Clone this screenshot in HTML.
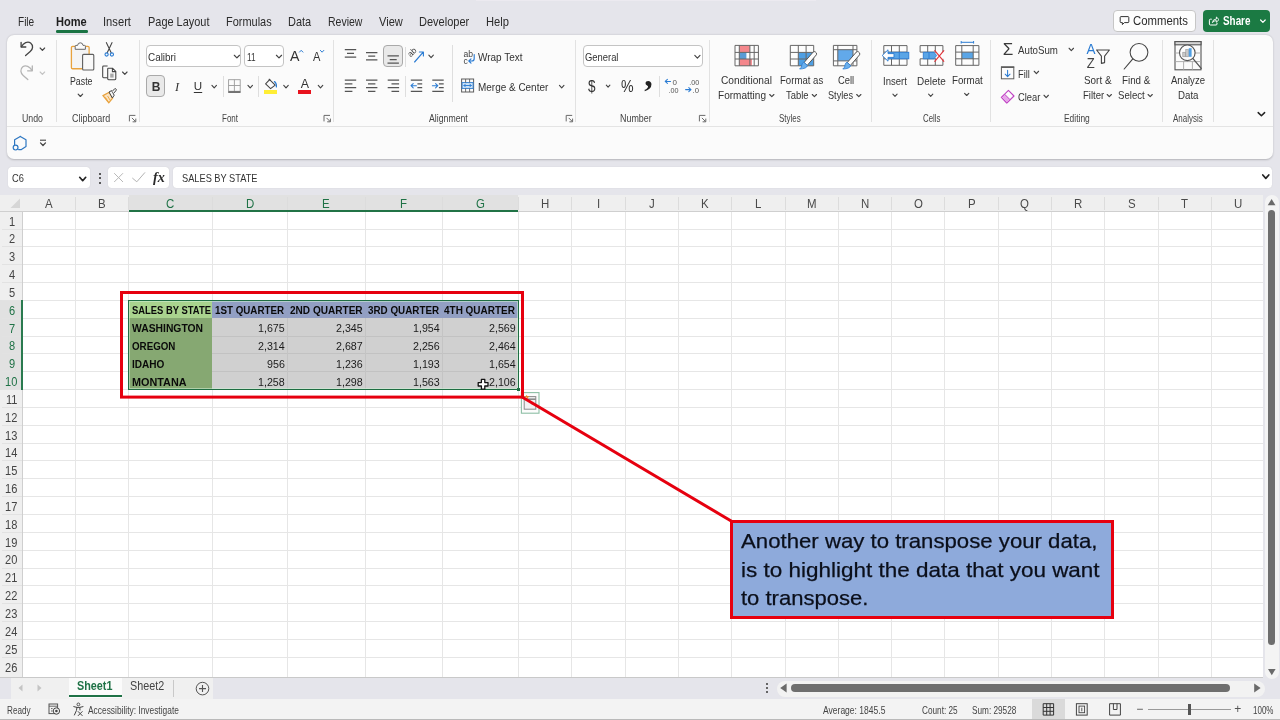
<!DOCTYPE html>
<html><head><meta charset="utf-8"><title>Excel</title>
<style>
html,body{margin:0;padding:0;}
body{width:1280px;height:720px;overflow:hidden;background:#e5e5eb;position:relative;font-family:"Liberation Sans",sans-serif;}
body>div{position:absolute;}
.t{position:absolute;white-space:nowrap;transform-origin:0 50%;}
#pg{position:absolute;left:0;top:0;width:1280px;height:720px;will-change:transform;}
#pg>div{position:absolute;}
svg.ov{position:absolute;left:0;top:0;width:1280px;height:720px;pointer-events:none;}
</style></head><body><div id="pg">
<div style="left:7px;top:35px;width:1266px;height:123.5px;background:#fbfbfb;border-radius:7px;box-shadow:0 0.5px 2px rgba(0,0,0,.22);"></div>
<div style="left:7px;top:126px;width:1266px;height:1px;background:#e4e4e4;"></div>
<div style="left:476px;top:0px;width:340px;height:1px;background:#eceaf0;"></div>
<span class="t" style="left:18.00px;top:16.41px;font-size:12.2px;line-height:12.2px;color:#2b2b2b;transform:scaleX(0.8248);">File</span>
<span class="t" style="left:56.20px;top:16.41px;font-size:12.2px;line-height:12.2px;color:#1f1f1f;font-weight:700;transform:scaleX(0.9081);">Home</span>
<span class="t" style="left:102.70px;top:16.41px;font-size:12.2px;line-height:12.2px;color:#2b2b2b;transform:scaleX(0.9180);">Insert</span>
<span class="t" style="left:147.50px;top:16.41px;font-size:12.2px;line-height:12.2px;color:#2b2b2b;transform:scaleX(0.8978);">Page Layout</span>
<span class="t" style="left:225.50px;top:16.41px;font-size:12.2px;line-height:12.2px;color:#2b2b2b;transform:scaleX(0.8983);">Formulas</span>
<span class="t" style="left:287.50px;top:16.41px;font-size:12.2px;line-height:12.2px;color:#2b2b2b;transform:scaleX(0.8991);">Data</span>
<span class="t" style="left:327.50px;top:16.41px;font-size:12.2px;line-height:12.2px;color:#2b2b2b;transform:scaleX(0.8622);">Review</span>
<span class="t" style="left:378.70px;top:16.41px;font-size:12.2px;line-height:12.2px;color:#2b2b2b;transform:scaleX(0.9074);">View</span>
<span class="t" style="left:419.20px;top:16.41px;font-size:12.2px;line-height:12.2px;color:#2b2b2b;transform:scaleX(0.9042);">Developer</span>
<span class="t" style="left:486.20px;top:16.41px;font-size:12.2px;line-height:12.2px;color:#2b2b2b;transform:scaleX(0.9174);">Help</span>
<div style="left:56px;top:30px;width:31.8px;height:2.5px;background:#1a7343;border-radius:1.2px;"></div>
<div style="left:1112.5px;top:9.5px;width:83px;height:22px;background:#fdfdfd;border-radius:4px;border:1px solid #c6c6c6;box-sizing:border-box;"></div>
<span class="t" style="left:1133.00px;top:15.21px;font-size:12.2px;line-height:12.2px;color:#2b2b2b;transform:scaleX(0.9324);">Comments</span>
<div style="left:1203px;top:9.5px;width:67px;height:22px;background:#1b7a43;border-radius:4px;"></div>
<span class="t" style="left:1223.10px;top:15.02px;font-size:12.2px;line-height:12.2px;color:#fff;font-weight:700;transform:scaleX(0.8108);">Share</span>
<span class="t" style="left:22.00px;top:113.90px;font-size:10.4px;line-height:10.4px;color:#444;transform:scaleX(0.8449);">Undo</span>
<span class="t" style="left:71.70px;top:113.90px;font-size:10.4px;line-height:10.4px;color:#444;transform:scaleX(0.8604);">Clipboard</span>
<span class="t" style="left:221.50px;top:113.90px;font-size:10.4px;line-height:10.4px;color:#444;transform:scaleX(0.7692);">Font</span>
<span class="t" style="left:428.70px;top:113.90px;font-size:10.4px;line-height:10.4px;color:#444;transform:scaleX(0.8393);">Alignment</span>
<span class="t" style="left:619.50px;top:113.90px;font-size:10.4px;line-height:10.4px;color:#444;transform:scaleX(0.8574);">Number</span>
<span class="t" style="left:778.70px;top:113.90px;font-size:10.4px;line-height:10.4px;color:#444;transform:scaleX(0.7692);">Styles</span>
<span class="t" style="left:922.50px;top:113.90px;font-size:10.4px;line-height:10.4px;color:#444;transform:scaleX(0.7563);">Cells</span>
<span class="t" style="left:1063.70px;top:113.90px;font-size:10.4px;line-height:10.4px;color:#444;transform:scaleX(0.8107);">Editing</span>
<span class="t" style="left:1173.00px;top:113.90px;font-size:10.4px;line-height:10.4px;color:#444;transform:scaleX(0.7666);">Analysis</span>
<div style="left:56.2px;top:40px;width:1px;height:82px;background:#e2e2e2;"></div>
<div style="left:138.7px;top:40px;width:1px;height:82px;background:#e2e2e2;"></div>
<div style="left:333.2px;top:40px;width:1px;height:82px;background:#e2e2e2;"></div>
<div style="left:575.0px;top:40px;width:1px;height:82px;background:#e2e2e2;"></div>
<div style="left:708.7px;top:40px;width:1px;height:82px;background:#e2e2e2;"></div>
<div style="left:870.7px;top:40px;width:1px;height:82px;background:#e2e2e2;"></div>
<div style="left:990.2px;top:40px;width:1px;height:82px;background:#e2e2e2;"></div>
<div style="left:1162.2px;top:40px;width:1px;height:82px;background:#e2e2e2;"></div>
<div style="left:1213.1px;top:40px;width:1px;height:82px;background:#e2e2e2;"></div>
<div style="left:222.5px;top:76px;width:1px;height:21px;background:#dedede;"></div>
<div style="left:258.2px;top:76px;width:1px;height:21px;background:#dedede;"></div>
<div style="left:404.5px;top:47px;width:1px;height:20px;background:#dedede;"></div>
<div style="left:404.5px;top:76px;width:1px;height:21px;background:#dedede;"></div>
<div style="left:452.0px;top:45px;width:1px;height:57px;background:#dedede;"></div>
<div style="left:659.0px;top:76px;width:1px;height:21px;background:#dedede;"></div>
<span class="t" style="left:69.50px;top:75.40px;font-size:11.6px;line-height:11.6px;color:#333;transform:scaleX(0.7592);">Paste</span>
<div style="left:146.1px;top:45.1px;width:95.4px;height:22.3px;background:#fff;border-radius:4px;border:1px solid #c4c4c4;box-sizing:border-box;"></div>
<span class="t" style="left:148.40px;top:51.21px;font-size:11.6px;line-height:11.6px;color:#333;transform:scaleX(0.8545);">Calibri</span>
<div style="left:243.7px;top:45.1px;width:40.5px;height:22.3px;background:#fff;border-radius:4px;border:1px solid #c4c4c4;box-sizing:border-box;"></div>
<span class="t" style="left:246.60px;top:51.21px;font-size:11.6px;line-height:11.6px;color:#333;transform:scaleX(0.7129);">11</span>
<div style="left:146.2px;top:75px;width:19.3px;height:22px;background:#e9e9e9;border-radius:4px;border:1px solid #a9a9a9;box-sizing:border-box;"></div>
<span class="t" style="left:151.68px;top:80.60px;font-size:12px;line-height:12px;color:#333;font-weight:700;">B</span>
<span class="t" style="left:174.99px;top:80.60px;font-size:12.5px;line-height:12.5px;color:#333;font-family:'Liberation Serif',serif;font-style:italic;">I</span>
<span class="t" style="left:193.82px;top:80.21px;font-size:11.6px;line-height:11.6px;color:#333;text-decoration:underline;text-underline-offset:1.5px;">U</span>
<span class="t" style="left:289.95px;top:47.81px;font-size:15.4px;line-height:15.4px;color:#333;transform:scaleX(0.9200);">A</span>
<span class="t" style="left:312.89px;top:50.81px;font-size:12.6px;line-height:12.6px;color:#333;transform:scaleX(0.8800);">A</span>
<span class="t" style="left:300.85px;top:78.41px;font-size:12.4px;line-height:12.4px;color:#333;">A</span>
<div style="left:298.1px;top:90px;width:13px;height:3.5px;background:#e8121d;"></div>
<div style="left:263.9px;top:90px;width:13.6px;height:3.5px;background:#ffee35;"></div>
<div style="left:383.2px;top:45.2px;width:20px;height:22px;background:#e9e9e9;border-radius:4px;border:1px solid #a9a9a9;box-sizing:border-box;"></div>
<span class="t" style="left:478.00px;top:51.21px;font-size:11.6px;line-height:11.6px;color:#333;transform:scaleX(0.8592);">Wrap Text</span>
<span class="t" style="left:478.20px;top:80.71px;font-size:11.6px;line-height:11.6px;color:#333;transform:scaleX(0.8584);">Merge &amp; Center</span>
<div style="left:582.6px;top:45.1px;width:120px;height:22.4px;background:#fff;border-radius:4px;border:1px solid #c4c4c4;box-sizing:border-box;"></div>
<span class="t" style="left:584.70px;top:51.21px;font-size:11.6px;line-height:11.6px;color:#333;transform:scaleX(0.8112);">General</span>
<span class="t" style="left:588.25px;top:77.80px;font-size:16.5px;line-height:16.5px;color:#333;transform:scaleX(0.8200);">$</span>
<span class="t" style="left:620.69px;top:78.21px;font-size:16.5px;line-height:16.5px;color:#333;transform:scaleX(0.8600);">%</span>
<span class="t" style="left:644.35px;top:58.30px;font-size:34px;line-height:34px;color:#222;font-family:'Liberation Serif',serif;font-weight:700;">,</span>
<span class="t" style="left:720.70px;top:73.61px;font-size:11.6px;line-height:11.6px;color:#333;transform:scaleX(0.8784);">Conditional</span>
<span class="t" style="left:717.50px;top:89.21px;font-size:11.6px;line-height:11.6px;color:#333;transform:scaleX(0.8657);">Formatting</span>
<span class="t" style="left:780.00px;top:73.61px;font-size:11.6px;line-height:11.6px;color:#333;transform:scaleX(0.8276);">Format as</span>
<span class="t" style="left:785.70px;top:89.21px;font-size:11.6px;line-height:11.6px;color:#333;transform:scaleX(0.8116);">Table</span>
<span class="t" style="left:837.50px;top:73.61px;font-size:11.6px;line-height:11.6px;color:#333;transform:scaleX(0.8096);">Cell</span>
<span class="t" style="left:828.00px;top:89.21px;font-size:11.6px;line-height:11.6px;color:#333;transform:scaleX(0.7909);">Styles</span>
<span class="t" style="left:883.20px;top:74.81px;font-size:11.6px;line-height:11.6px;color:#333;transform:scaleX(0.8207);">Insert</span>
<span class="t" style="left:917.00px;top:74.81px;font-size:11.6px;line-height:11.6px;color:#333;transform:scaleX(0.8561);">Delete</span>
<span class="t" style="left:951.70px;top:73.90px;font-size:11.6px;line-height:11.6px;color:#333;transform:scaleX(0.8389);">Format</span>
<span class="t" style="left:1018.20px;top:43.71px;font-size:11.6px;line-height:11.6px;color:#333;transform:scaleX(0.8380);">AutoSum</span>
<span class="t" style="left:1018.20px;top:67.51px;font-size:11.6px;line-height:11.6px;color:#333;transform:scaleX(0.7978);">Fill</span>
<span class="t" style="left:1018.20px;top:91.21px;font-size:11.6px;line-height:11.6px;color:#333;transform:scaleX(0.8044);">Clear</span>
<span class="t" style="left:1083.70px;top:73.61px;font-size:11.6px;line-height:11.6px;color:#333;transform:scaleX(0.8528);">Sort &amp;</span>
<span class="t" style="left:1082.50px;top:89.21px;font-size:11.6px;line-height:11.6px;color:#333;transform:scaleX(0.8232);">Filter</span>
<span class="t" style="left:1121.70px;top:73.61px;font-size:11.6px;line-height:11.6px;color:#333;transform:scaleX(0.8442);">Find &amp;</span>
<span class="t" style="left:1118.20px;top:89.21px;font-size:11.6px;line-height:11.6px;color:#333;transform:scaleX(0.8311);">Select</span>
<span class="t" style="left:1171.00px;top:73.61px;font-size:11.6px;line-height:11.6px;color:#333;transform:scaleX(0.8233);">Analyze</span>
<span class="t" style="left:1177.50px;top:88.61px;font-size:11.6px;line-height:11.6px;color:#333;transform:scaleX(0.8356);">Data</span>
<span class="t" style="left:1002.73px;top:41.21px;font-size:17px;line-height:17px;color:#3a3a3a;">Σ</span>
<div style="left:7.7px;top:167px;width:82.6px;height:21px;background:#fff;border-radius:3.5px;box-shadow:0 0 1px rgba(0,0,0,.18);"></div>
<span class="t" style="left:11.80px;top:173.01px;font-size:11.8px;line-height:11.8px;color:#333;transform:scaleX(0.7879);">C6</span>
<div style="left:98.5px;top:173.0px;width:2.2px;height:2.2px;background:#2b2b2b;border-radius:1px;"></div>
<div style="left:98.5px;top:177.3px;width:2.2px;height:2.2px;background:#2b2b2b;border-radius:1px;"></div>
<div style="left:98.5px;top:181.6px;width:2.2px;height:2.2px;background:#2b2b2b;border-radius:1px;"></div>
<div style="left:108.4px;top:167px;width:60.8px;height:21px;background:#fff;border-radius:3.5px;box-shadow:0 0 1px rgba(0,0,0,.18);"></div>
<span class="t" style="left:153.20px;top:169.92px;font-size:15px;line-height:15px;color:#2b2b2b;font-family:'Liberation Serif',serif;font-weight:700;font-style:italic;transform:scaleX(0.9421);">fx</span>
<div style="left:173.2px;top:167px;width:1099px;height:21px;background:#fff;border-radius:3.5px;box-shadow:0 0 1px rgba(0,0,0,.18);"></div>
<span class="t" style="left:182.00px;top:173.00px;font-size:11px;line-height:11px;color:#333;transform:scaleX(0.8401);">SALES BY STATE</span>
<div style="left:0px;top:195px;width:1263.3px;height:482.0px;background:#fff;"></div>
<div style="left:0px;top:195px;width:1263.3px;height:16.4px;background:#efefef;"></div>
<div style="left:0px;top:211.2px;width:22.5px;height:465.8px;background:#efefef;"></div>
<div style="left:128.8px;top:195px;width:389.7px;height:16.4px;background:#e1e1e1;"></div>
<div style="left:0px;top:300.4px;width:22.5px;height:89.2px;background:#e1e1e1;"></div>
<div style="left:0px;top:210.8px;width:1263.3px;height:1px;background:#cfcfcf;"></div>
<div style="left:22px;top:211px;width:1px;height:466.0px;background:#cfcfcf;"></div>
<div style="left:22.5px;top:228.54px;width:1240.8px;height:1px;background:#e6e6e6;"></div>
<div style="left:22.5px;top:246.38px;width:1240.8px;height:1px;background:#e6e6e6;"></div>
<div style="left:22.5px;top:264.21999999999997px;width:1240.8px;height:1px;background:#e6e6e6;"></div>
<div style="left:22.5px;top:282.06px;width:1240.8px;height:1px;background:#e6e6e6;"></div>
<div style="left:22.5px;top:299.9px;width:1240.8px;height:1px;background:#e6e6e6;"></div>
<div style="left:22.5px;top:317.74px;width:1240.8px;height:1px;background:#e6e6e6;"></div>
<div style="left:22.5px;top:335.58px;width:1240.8px;height:1px;background:#e6e6e6;"></div>
<div style="left:22.5px;top:353.41999999999996px;width:1240.8px;height:1px;background:#e6e6e6;"></div>
<div style="left:22.5px;top:371.26px;width:1240.8px;height:1px;background:#e6e6e6;"></div>
<div style="left:22.5px;top:389.1px;width:1240.8px;height:1px;background:#e6e6e6;"></div>
<div style="left:22.5px;top:406.94px;width:1240.8px;height:1px;background:#e6e6e6;"></div>
<div style="left:22.5px;top:424.78px;width:1240.8px;height:1px;background:#e6e6e6;"></div>
<div style="left:22.5px;top:442.62px;width:1240.8px;height:1px;background:#e6e6e6;"></div>
<div style="left:22.5px;top:460.46px;width:1240.8px;height:1px;background:#e6e6e6;"></div>
<div style="left:22.5px;top:478.3px;width:1240.8px;height:1px;background:#e6e6e6;"></div>
<div style="left:22.5px;top:496.14px;width:1240.8px;height:1px;background:#e6e6e6;"></div>
<div style="left:22.5px;top:513.98px;width:1240.8px;height:1px;background:#e6e6e6;"></div>
<div style="left:22.5px;top:531.8199999999999px;width:1240.8px;height:1px;background:#e6e6e6;"></div>
<div style="left:22.5px;top:549.66px;width:1240.8px;height:1px;background:#e6e6e6;"></div>
<div style="left:22.5px;top:567.5px;width:1240.8px;height:1px;background:#e6e6e6;"></div>
<div style="left:22.5px;top:585.3399999999999px;width:1240.8px;height:1px;background:#e6e6e6;"></div>
<div style="left:22.5px;top:603.1800000000001px;width:1240.8px;height:1px;background:#e6e6e6;"></div>
<div style="left:22.5px;top:621.02px;width:1240.8px;height:1px;background:#e6e6e6;"></div>
<div style="left:22.5px;top:638.8599999999999px;width:1240.8px;height:1px;background:#e6e6e6;"></div>
<div style="left:22.5px;top:656.7px;width:1240.8px;height:1px;background:#e6e6e6;"></div>
<div style="left:75.0px;top:211.5px;width:1px;height:465.5px;background:#e6e6e6;"></div>
<div style="left:128.3px;top:211.5px;width:1px;height:465.5px;background:#e6e6e6;"></div>
<div style="left:211.8px;top:211.5px;width:1px;height:465.5px;background:#e6e6e6;"></div>
<div style="left:286.5px;top:211.5px;width:1px;height:465.5px;background:#e6e6e6;"></div>
<div style="left:364.7px;top:211.5px;width:1px;height:465.5px;background:#e6e6e6;"></div>
<div style="left:441.7px;top:211.5px;width:1px;height:465.5px;background:#e6e6e6;"></div>
<div style="left:518.0px;top:211.5px;width:1px;height:465.5px;background:#e6e6e6;"></div>
<div style="left:571.3px;top:211.5px;width:1px;height:465.5px;background:#e6e6e6;"></div>
<div style="left:624.6px;top:211.5px;width:1px;height:465.5px;background:#e6e6e6;"></div>
<div style="left:677.9px;top:211.5px;width:1px;height:465.5px;background:#e6e6e6;"></div>
<div style="left:731.2px;top:211.5px;width:1px;height:465.5px;background:#e6e6e6;"></div>
<div style="left:784.5px;top:211.5px;width:1px;height:465.5px;background:#e6e6e6;"></div>
<div style="left:837.8px;top:211.5px;width:1px;height:465.5px;background:#e6e6e6;"></div>
<div style="left:891.0999999999999px;top:211.5px;width:1px;height:465.5px;background:#e6e6e6;"></div>
<div style="left:944.4px;top:211.5px;width:1px;height:465.5px;background:#e6e6e6;"></div>
<div style="left:997.7px;top:211.5px;width:1px;height:465.5px;background:#e6e6e6;"></div>
<div style="left:1051.0px;top:211.5px;width:1px;height:465.5px;background:#e6e6e6;"></div>
<div style="left:1104.3px;top:211.5px;width:1px;height:465.5px;background:#e6e6e6;"></div>
<div style="left:1157.6px;top:211.5px;width:1px;height:465.5px;background:#e6e6e6;"></div>
<div style="left:1210.9px;top:211.5px;width:1px;height:465.5px;background:#e6e6e6;"></div>
<div style="left:1264.1999999999998px;top:211.5px;width:1px;height:465.5px;background:#e6e6e6;"></div>
<div style="left:75.0px;top:197px;width:1px;height:13px;background:#dcdcdc;"></div>
<div style="left:128.3px;top:197px;width:1px;height:13px;background:#dcdcdc;"></div>
<div style="left:211.8px;top:197px;width:1px;height:13px;background:#dcdcdc;"></div>
<div style="left:286.5px;top:197px;width:1px;height:13px;background:#dcdcdc;"></div>
<div style="left:364.7px;top:197px;width:1px;height:13px;background:#dcdcdc;"></div>
<div style="left:441.7px;top:197px;width:1px;height:13px;background:#dcdcdc;"></div>
<div style="left:518.0px;top:197px;width:1px;height:13px;background:#dcdcdc;"></div>
<div style="left:571.3px;top:197px;width:1px;height:13px;background:#dcdcdc;"></div>
<div style="left:624.6px;top:197px;width:1px;height:13px;background:#dcdcdc;"></div>
<div style="left:677.9px;top:197px;width:1px;height:13px;background:#dcdcdc;"></div>
<div style="left:731.2px;top:197px;width:1px;height:13px;background:#dcdcdc;"></div>
<div style="left:784.5px;top:197px;width:1px;height:13px;background:#dcdcdc;"></div>
<div style="left:837.8px;top:197px;width:1px;height:13px;background:#dcdcdc;"></div>
<div style="left:891.0999999999999px;top:197px;width:1px;height:13px;background:#dcdcdc;"></div>
<div style="left:944.4px;top:197px;width:1px;height:13px;background:#dcdcdc;"></div>
<div style="left:997.7px;top:197px;width:1px;height:13px;background:#dcdcdc;"></div>
<div style="left:1051.0px;top:197px;width:1px;height:13px;background:#dcdcdc;"></div>
<div style="left:1104.3px;top:197px;width:1px;height:13px;background:#dcdcdc;"></div>
<div style="left:1157.6px;top:197px;width:1px;height:13px;background:#dcdcdc;"></div>
<div style="left:1210.9px;top:197px;width:1px;height:13px;background:#dcdcdc;"></div>
<div style="left:1264.1999999999998px;top:197px;width:1px;height:13px;background:#dcdcdc;"></div>
<div style="left:2px;top:228.54px;width:20px;height:1px;background:#e2e2e2;"></div>
<div style="left:2px;top:246.38px;width:20px;height:1px;background:#e2e2e2;"></div>
<div style="left:2px;top:264.21999999999997px;width:20px;height:1px;background:#e2e2e2;"></div>
<div style="left:2px;top:282.06px;width:20px;height:1px;background:#e2e2e2;"></div>
<div style="left:2px;top:299.9px;width:20px;height:1px;background:#e2e2e2;"></div>
<div style="left:2px;top:317.74px;width:20px;height:1px;background:#e2e2e2;"></div>
<div style="left:2px;top:335.58px;width:20px;height:1px;background:#e2e2e2;"></div>
<div style="left:2px;top:353.41999999999996px;width:20px;height:1px;background:#e2e2e2;"></div>
<div style="left:2px;top:371.26px;width:20px;height:1px;background:#e2e2e2;"></div>
<div style="left:2px;top:389.1px;width:20px;height:1px;background:#e2e2e2;"></div>
<div style="left:2px;top:406.94px;width:20px;height:1px;background:#e2e2e2;"></div>
<div style="left:2px;top:424.78px;width:20px;height:1px;background:#e2e2e2;"></div>
<div style="left:2px;top:442.62px;width:20px;height:1px;background:#e2e2e2;"></div>
<div style="left:2px;top:460.46px;width:20px;height:1px;background:#e2e2e2;"></div>
<div style="left:2px;top:478.3px;width:20px;height:1px;background:#e2e2e2;"></div>
<div style="left:2px;top:496.14px;width:20px;height:1px;background:#e2e2e2;"></div>
<div style="left:2px;top:513.98px;width:20px;height:1px;background:#e2e2e2;"></div>
<div style="left:2px;top:531.8199999999999px;width:20px;height:1px;background:#e2e2e2;"></div>
<div style="left:2px;top:549.66px;width:20px;height:1px;background:#e2e2e2;"></div>
<div style="left:2px;top:567.5px;width:20px;height:1px;background:#e2e2e2;"></div>
<div style="left:2px;top:585.3399999999999px;width:20px;height:1px;background:#e2e2e2;"></div>
<div style="left:2px;top:603.1800000000001px;width:20px;height:1px;background:#e2e2e2;"></div>
<div style="left:2px;top:621.02px;width:20px;height:1px;background:#e2e2e2;"></div>
<div style="left:2px;top:638.8599999999999px;width:20px;height:1px;background:#e2e2e2;"></div>
<div style="left:2px;top:656.7px;width:20px;height:1px;background:#e2e2e2;"></div>
<div style="left:128.8px;top:210.4px;width:389.7px;height:1.7px;background:#217346;"></div>
<div style="left:21.3px;top:300.4px;width:1.6px;height:89.2px;background:#2a7a4f;"></div>
<span class="t" style="left:45.16px;top:197.71px;font-size:12.2px;line-height:12.2px;color:#4a4a4a;transform:scaleX(0.9400);">A</span>
<span class="t" style="left:98.34px;top:197.71px;font-size:12.2px;line-height:12.2px;color:#4a4a4a;transform:scaleX(0.9400);">B</span>
<span class="t" style="left:166.42px;top:197.71px;font-size:12.2px;line-height:12.2px;color:#1f7246;transform:scaleX(0.9400);">C</span>
<span class="t" style="left:245.52px;top:197.71px;font-size:12.2px;line-height:12.2px;color:#1f7246;transform:scaleX(0.9400);">D</span>
<span class="t" style="left:322.29px;top:197.71px;font-size:12.2px;line-height:12.2px;color:#1f7246;transform:scaleX(0.9400);">E</span>
<span class="t" style="left:400.20px;top:197.71px;font-size:12.2px;line-height:12.2px;color:#1f7246;transform:scaleX(0.9400);">F</span>
<span class="t" style="left:475.88px;top:197.71px;font-size:12.2px;line-height:12.2px;color:#1f7246;transform:scaleX(0.9400);">G</span>
<span class="t" style="left:541.02px;top:197.71px;font-size:12.2px;line-height:12.2px;color:#4a4a4a;transform:scaleX(0.9400);">H</span>
<span class="t" style="left:596.84px;top:197.71px;font-size:12.2px;line-height:12.2px;color:#4a4a4a;transform:scaleX(0.9400);">I</span>
<span class="t" style="left:648.88px;top:197.71px;font-size:12.2px;line-height:12.2px;color:#4a4a4a;transform:scaleX(0.9400);">J</span>
<span class="t" style="left:701.24px;top:197.71px;font-size:12.2px;line-height:12.2px;color:#4a4a4a;transform:scaleX(0.9400);">K</span>
<span class="t" style="left:755.17px;top:197.71px;font-size:12.2px;line-height:12.2px;color:#4a4a4a;transform:scaleX(0.9400);">L</span>
<span class="t" style="left:806.86px;top:197.71px;font-size:12.2px;line-height:12.2px;color:#4a4a4a;transform:scaleX(0.9400);">M</span>
<span class="t" style="left:860.82px;top:197.71px;font-size:12.2px;line-height:12.2px;color:#4a4a4a;transform:scaleX(0.9400);">N</span>
<span class="t" style="left:913.78px;top:197.71px;font-size:12.2px;line-height:12.2px;color:#4a4a4a;transform:scaleX(0.9400);">O</span>
<span class="t" style="left:967.74px;top:197.71px;font-size:12.2px;line-height:12.2px;color:#4a4a4a;transform:scaleX(0.9400);">P</span>
<span class="t" style="left:1020.38px;top:197.71px;font-size:12.2px;line-height:12.2px;color:#4a4a4a;transform:scaleX(0.9400);">Q</span>
<span class="t" style="left:1074.02px;top:197.71px;font-size:12.2px;line-height:12.2px;color:#4a4a4a;transform:scaleX(0.9400);">R</span>
<span class="t" style="left:1127.64px;top:197.71px;font-size:12.2px;line-height:12.2px;color:#4a4a4a;transform:scaleX(0.9400);">S</span>
<span class="t" style="left:1181.25px;top:197.71px;font-size:12.2px;line-height:12.2px;color:#4a4a4a;transform:scaleX(0.9400);">T</span>
<span class="t" style="left:1233.92px;top:197.71px;font-size:12.2px;line-height:12.2px;color:#4a4a4a;transform:scaleX(0.9400);">U</span>
<span class="t" style="left:8.53px;top:216.50px;font-size:11.9px;line-height:11.9px;color:#444;transform:scaleX(0.9300);">1</span>
<span class="t" style="left:8.53px;top:234.34px;font-size:11.9px;line-height:11.9px;color:#444;transform:scaleX(0.9300);">2</span>
<span class="t" style="left:8.53px;top:252.18px;font-size:11.9px;line-height:11.9px;color:#444;transform:scaleX(0.9300);">3</span>
<span class="t" style="left:8.53px;top:270.03px;font-size:11.9px;line-height:11.9px;color:#444;transform:scaleX(0.9300);">4</span>
<span class="t" style="left:8.53px;top:287.87px;font-size:11.9px;line-height:11.9px;color:#444;transform:scaleX(0.9300);">5</span>
<span class="t" style="left:8.53px;top:305.70px;font-size:11.9px;line-height:11.9px;color:#1f7246;transform:scaleX(0.9300);">6</span>
<span class="t" style="left:8.53px;top:323.54px;font-size:11.9px;line-height:11.9px;color:#1f7246;transform:scaleX(0.9300);">7</span>
<span class="t" style="left:8.53px;top:341.39px;font-size:11.9px;line-height:11.9px;color:#1f7246;transform:scaleX(0.9300);">8</span>
<span class="t" style="left:8.53px;top:359.23px;font-size:11.9px;line-height:11.9px;color:#1f7246;transform:scaleX(0.9300);">9</span>
<span class="t" style="left:5.46px;top:377.06px;font-size:11.9px;line-height:11.9px;color:#1f7246;transform:scaleX(0.9300);">10</span>
<span class="t" style="left:5.85px;top:394.90px;font-size:11.9px;line-height:11.9px;color:#444;transform:scaleX(0.9300);">11</span>
<span class="t" style="left:5.46px;top:412.75px;font-size:11.9px;line-height:11.9px;color:#444;transform:scaleX(0.9300);">12</span>
<span class="t" style="left:5.46px;top:430.59px;font-size:11.9px;line-height:11.9px;color:#444;transform:scaleX(0.9300);">13</span>
<span class="t" style="left:5.46px;top:448.42px;font-size:11.9px;line-height:11.9px;color:#444;transform:scaleX(0.9300);">14</span>
<span class="t" style="left:5.46px;top:466.26px;font-size:11.9px;line-height:11.9px;color:#444;transform:scaleX(0.9300);">15</span>
<span class="t" style="left:5.46px;top:484.11px;font-size:11.9px;line-height:11.9px;color:#444;transform:scaleX(0.9300);">16</span>
<span class="t" style="left:5.46px;top:501.95px;font-size:11.9px;line-height:11.9px;color:#444;transform:scaleX(0.9300);">17</span>
<span class="t" style="left:5.46px;top:519.78px;font-size:11.9px;line-height:11.9px;color:#444;transform:scaleX(0.9300);">18</span>
<span class="t" style="left:5.46px;top:537.62px;font-size:11.9px;line-height:11.9px;color:#444;transform:scaleX(0.9300);">19</span>
<span class="t" style="left:5.46px;top:555.47px;font-size:11.9px;line-height:11.9px;color:#444;transform:scaleX(0.9300);">20</span>
<span class="t" style="left:5.46px;top:573.31px;font-size:11.9px;line-height:11.9px;color:#444;transform:scaleX(0.9300);">21</span>
<span class="t" style="left:5.46px;top:591.14px;font-size:11.9px;line-height:11.9px;color:#444;transform:scaleX(0.9300);">22</span>
<span class="t" style="left:5.46px;top:608.98px;font-size:11.9px;line-height:11.9px;color:#444;transform:scaleX(0.9300);">23</span>
<span class="t" style="left:5.46px;top:626.82px;font-size:11.9px;line-height:11.9px;color:#444;transform:scaleX(0.9300);">24</span>
<span class="t" style="left:5.46px;top:644.67px;font-size:11.9px;line-height:11.9px;color:#444;transform:scaleX(0.9300);">25</span>
<span class="t" style="left:5.46px;top:662.50px;font-size:11.9px;line-height:11.9px;color:#444;transform:scaleX(0.9300);">26</span>
<div style="left:128.8px;top:300.4px;width:83.5px;height:17.84px;background:#a9d38e;"></div>
<div style="left:128.8px;top:318.24px;width:83.5px;height:71.36px;background:#86a872;"></div>
<div style="left:212.3px;top:300.4px;width:306.2px;height:17.84px;background:#929fc3;"></div>
<div style="left:212.3px;top:318.24px;width:306.2px;height:71.36px;background:#d0d0d0;"></div>
<div style="left:212.3px;top:335.58px;width:306.2px;height:1px;background:#c2c2c2;"></div>
<div style="left:212.3px;top:353.41999999999996px;width:306.2px;height:1px;background:#c2c2c2;"></div>
<div style="left:212.3px;top:371.26px;width:306.2px;height:1px;background:#c2c2c2;"></div>
<div style="left:286.5px;top:318.24px;width:1px;height:71.36px;background:#c4c4c4;"></div>
<div style="left:364.7px;top:318.24px;width:1px;height:71.36px;background:#c4c4c4;"></div>
<div style="left:441.7px;top:318.24px;width:1px;height:71.36px;background:#c4c4c4;"></div>
<div style="left:128.0px;top:299.59999999999997px;width:391.09999999999997px;height:90.60000000000001px;border:1.3px solid #1f6e43;box-sizing:border-box;box-shadow:inset 0 0 0 1px rgba(210,240,215,.55);"></div>
<div style="left:516.9px;top:387.8px;width:3.4px;height:3.4px;background:#1f6e43;"></div>
<span class="t" style="left:131.60px;top:305.41px;font-size:11.2px;line-height:11.2px;color:#0a0a0a;font-weight:700;transform:scaleX(0.8407);">SALES BY STATE</span>
<span class="t" style="left:131.60px;top:323.25px;font-size:11.2px;line-height:11.2px;color:#0a0a0a;font-weight:700;transform:scaleX(0.9240);">WASHINGTON</span>
<span class="t" style="left:131.60px;top:341.09px;font-size:11.2px;line-height:11.2px;color:#0a0a0a;font-weight:700;transform:scaleX(0.8718);">OREGON</span>
<span class="t" style="left:131.60px;top:358.92px;font-size:11.2px;line-height:11.2px;color:#0a0a0a;font-weight:700;transform:scaleX(0.8984);">IDAHO</span>
<span class="t" style="left:131.60px;top:376.77px;font-size:11.2px;line-height:11.2px;color:#0a0a0a;font-weight:700;transform:scaleX(0.9682);">MONTANA</span>
<span class="t" style="left:214.80px;top:305.41px;font-size:11.2px;line-height:11.2px;color:#0a0a0a;font-weight:700;transform:scaleX(0.8745);">1ST QUARTER</span>
<span class="t" style="left:289.60px;top:305.41px;font-size:11.2px;line-height:11.2px;color:#0a0a0a;font-weight:700;transform:scaleX(0.8984);">2ND QUARTER</span>
<span class="t" style="left:367.70px;top:305.41px;font-size:11.2px;line-height:11.2px;color:#0a0a0a;font-weight:700;transform:scaleX(0.8799);">3RD QUARTER</span>
<span class="t" style="left:444.20px;top:305.41px;font-size:11.2px;line-height:11.2px;color:#0a0a0a;font-weight:700;transform:scaleX(0.8916);">4TH QUARTER</span>
<span class="t" style="left:257.61px;top:323.25px;font-size:11.2px;line-height:11.2px;color:#1c1c1c;transform:scaleX(0.9550);">1,675</span>
<span class="t" style="left:335.61px;top:323.25px;font-size:11.2px;line-height:11.2px;color:#1c1c1c;transform:scaleX(0.9550);">2,345</span>
<span class="t" style="left:412.61px;top:323.25px;font-size:11.2px;line-height:11.2px;color:#1c1c1c;transform:scaleX(0.9550);">1,954</span>
<span class="t" style="left:488.91px;top:323.25px;font-size:11.2px;line-height:11.2px;color:#1c1c1c;transform:scaleX(0.9550);">2,569</span>
<span class="t" style="left:257.61px;top:341.09px;font-size:11.2px;line-height:11.2px;color:#1c1c1c;transform:scaleX(0.9550);">2,314</span>
<span class="t" style="left:335.61px;top:341.09px;font-size:11.2px;line-height:11.2px;color:#1c1c1c;transform:scaleX(0.9550);">2,687</span>
<span class="t" style="left:412.61px;top:341.09px;font-size:11.2px;line-height:11.2px;color:#1c1c1c;transform:scaleX(0.9550);">2,256</span>
<span class="t" style="left:488.91px;top:341.09px;font-size:11.2px;line-height:11.2px;color:#1c1c1c;transform:scaleX(0.9550);">2,464</span>
<span class="t" style="left:266.54px;top:358.92px;font-size:11.2px;line-height:11.2px;color:#1c1c1c;transform:scaleX(0.9550);">956</span>
<span class="t" style="left:335.61px;top:358.92px;font-size:11.2px;line-height:11.2px;color:#1c1c1c;transform:scaleX(0.9550);">1,236</span>
<span class="t" style="left:412.61px;top:358.92px;font-size:11.2px;line-height:11.2px;color:#1c1c1c;transform:scaleX(0.9550);">1,193</span>
<span class="t" style="left:488.91px;top:358.92px;font-size:11.2px;line-height:11.2px;color:#1c1c1c;transform:scaleX(0.9550);">1,654</span>
<span class="t" style="left:257.61px;top:376.77px;font-size:11.2px;line-height:11.2px;color:#1c1c1c;transform:scaleX(0.9550);">1,258</span>
<span class="t" style="left:335.61px;top:376.77px;font-size:11.2px;line-height:11.2px;color:#1c1c1c;transform:scaleX(0.9550);">1,298</span>
<span class="t" style="left:412.61px;top:376.77px;font-size:11.2px;line-height:11.2px;color:#1c1c1c;transform:scaleX(0.9550);">1,563</span>
<span class="t" style="left:488.91px;top:376.77px;font-size:11.2px;line-height:11.2px;color:#1c1c1c;transform:scaleX(0.9550);">2,106</span>
<div style="left:730px;top:520px;width:384.2px;height:99.2px;background:#8eaadb;border:3px solid #e6000f;box-sizing:border-box;"></div>
<span class="t" style="left:740.60px;top:530.71px;font-size:20.6px;line-height:20.6px;color:#0b0f1a;transform:scaleX(1.0775);-webkit-text-stroke:0.25px #0b0f1a;">Another way to transpose your data,</span>
<span class="t" style="left:740.90px;top:559.52px;font-size:20.6px;line-height:20.6px;color:#0b0f1a;transform:scaleX(1.0914);-webkit-text-stroke:0.25px #0b0f1a;">is to highlight the data that you want</span>
<span class="t" style="left:740.60px;top:588.30px;font-size:20.6px;line-height:20.6px;color:#0b0f1a;transform:scaleX(1.0700);-webkit-text-stroke:0.25px #0b0f1a;">to transpose.</span>
<div style="left:1263.3px;top:195px;width:16.700000000000045px;height:482.0px;background:#e5e5eb;"></div>
<div style="left:1264.6px;top:195px;width:14.6px;height:484px;background:#f4f4f4;border-radius:7px;"></div>
<div style="left:1268px;top:210.4px;width:7.3px;height:435px;background:#6e6e6e;border-radius:3.6px;"></div>
<div style="left:0px;top:677.0px;width:1263px;height:22px;background:#e5e5eb;"></div>
<div style="left:0px;top:676.6px;width:1263px;height:1px;background:#c9c9c9;"></div>
<div style="left:11px;top:678px;width:202px;height:20.5px;background:#f0f0f0;"></div>
<div style="left:68.7px;top:678px;width:53px;height:20px;background:#fbfbfb;"></div>
<div style="left:68.7px;top:695.4px;width:53px;height:2px;background:#1f7246;"></div>
<span class="t" style="left:77.00px;top:680.00px;font-size:12.4px;line-height:12.4px;color:#1f7246;font-weight:700;transform:scaleX(0.8728);">Sheet1</span>
<span class="t" style="left:130.00px;top:680.00px;font-size:12.4px;line-height:12.4px;color:#444;transform:scaleX(0.8701);">Sheet2</span>
<div style="left:173px;top:680px;width:1px;height:17px;background:#c9c9c9;"></div>
<div style="left:777px;top:680.5px;width:487.6px;height:16px;background:#f2f2f2;border-radius:8px;"></div>
<div style="left:790.6px;top:684px;width:439px;height:8px;background:#6e6e6e;border-radius:4px;"></div>
<div style="left:765.6px;top:682.8px;width:2px;height:2px;background:#3a3a3a;border-radius:1px;"></div>
<div style="left:765.6px;top:687px;width:2px;height:2px;background:#3a3a3a;border-radius:1px;"></div>
<div style="left:765.6px;top:691.2px;width:2px;height:2px;background:#3a3a3a;border-radius:1px;"></div>
<div style="left:0px;top:698.8px;width:1280px;height:21.2px;background:#f3f3f3;"></div>
<div style="left:0px;top:719px;width:1280px;height:1px;background:#b9b9b9;"></div>
<span class="t" style="left:6.90px;top:705.60px;font-size:10.4px;line-height:10.4px;color:#444;transform:scaleX(0.7852);">Ready</span>
<span class="t" style="left:88.20px;top:705.60px;font-size:10.2px;line-height:10.2px;color:#444;transform:scaleX(0.8230);">Accessibility: Investigate</span>
<span class="t" style="left:823.00px;top:705.60px;font-size:10.2px;line-height:10.2px;color:#444;transform:scaleX(0.8371);">Average: 1845.5</span>
<span class="t" style="left:922.30px;top:705.60px;font-size:10.2px;line-height:10.2px;color:#444;transform:scaleX(0.8074);">Count: 25</span>
<span class="t" style="left:972.00px;top:705.60px;font-size:10.2px;line-height:10.2px;color:#444;transform:scaleX(0.8068);">Sum: 29528</span>
<span class="t" style="left:1252.70px;top:705.60px;font-size:10.2px;line-height:10.2px;color:#444;transform:scaleX(0.7851);">100%</span>
<div style="left:1032.3px;top:699.4px;width:32.8px;height:19.4px;background:#dadada;"></div>
<div style="left:1147.5px;top:709.2px;width:83px;height:1.2px;background:#9a9a9a;"></div>
<div style="left:1188px;top:704.2px;width:2.8px;height:11px;background:#555;"></div>
<span class="t" style="left:1136.29px;top:703.01px;font-size:12px;line-height:12px;color:#555;">−</span>
<span class="t" style="left:1234.29px;top:703.41px;font-size:12px;line-height:12px;color:#555;">+</span>
<svg class="ov" viewBox="0 0 1280 720">
<path d="M20 198.5 L20 208 L10.5 208 Z" fill="#d6d6d6"/>
<path d="M1267.7 205.2 L1271.6 199 L1275.5 205.2 Z" fill="#6a6a6a"/>
<path d="M1268 669 L1271.8 675.2 L1275.6 669 Z" fill="#6a6a6a"/>
<circle cx="202.5" cy="688.6" r="6.3" fill="none" stroke="#555" stroke-width="1"/><path d="M199 688.6h7M202.5 685.1v7" stroke="#555" stroke-width="1.1"/>
<path d="M22.5 684.5 L18.5 688 L22.5 691.5 Z" fill="#c4c4c4"/><path d="M37.5 684.5 L41.5 688 L37.5 691.5 Z" fill="#c4c4c4"/>
<path d="M786.6 683.4 L780.2 688 L786.6 692.6 Z" fill="#6a6a6a"/><path d="M1254.2 683.4 L1260.6 688 L1254.2 692.6 Z" fill="#6a6a6a"/>
<path d="M21.1 42.3 V47 H25.8" fill="none" stroke="#444" stroke-width="1.3" stroke-linecap="round" stroke-linejoin="round"/>
<path d="M21.4 46.6 C23.5 43 27.6 40.8 30.6 43 C33.6 45.4 32.9 49.4 30.2 51.6 L25.6 55.6" fill="none" stroke="#444" stroke-width="1.3" stroke-linecap="round"/>
<path d="M40.15 48.00 L42.40 50.40 L44.65 48.00" fill="none" stroke="#444" stroke-width="1.15" stroke-linecap="round" stroke-linejoin="round"/>
<path d="M32.3 65.9 V70.8 H27.6" fill="none" stroke="#b4b4b4" stroke-width="1.3" stroke-linecap="round" stroke-linejoin="round"/>
<path d="M32 70.4 C29.9 66.8 25.8 64.6 22.8 66.8 C19.8 69.2 20.5 73.2 23.2 75.4 L27.8 79.6" fill="none" stroke="#b4b4b4" stroke-width="1.3" stroke-linecap="round"/>
<path d="M40.15 72.00 L42.40 74.40 L44.65 72.00" fill="none" stroke="#c4c4c4" stroke-width="1.15" stroke-linecap="round" stroke-linejoin="round"/>
<path d="M75.5 46.4 H72.6 Q71.5 46.4 71.5 47.5 V67.6 Q71.5 68.7 72.6 68.7 H82 M85 46.4 H87.9 Q89 46.4 89 47.5 V54" fill="none" stroke="#e8a23d" stroke-width="1.5" />
<rect x="72.3" y="47.2" width="16" height="20.8" fill="#f4f4f4"/>
<path d="M75.2 49.3 V46.2 Q75.2 45.4 76 45.4 H77.6 Q77.8 42.8 80.3 42.8 Q82.8 42.8 83 45.4 H84.6 Q85.4 45.4 85.4 46.2 V49.3 Z" fill="#fafafa" stroke="#6a6a6a" stroke-width="1.0" />
<rect x="82.6" y="54.4" width="11.2" height="15.6" rx="1" fill="#f9f9f9" stroke="#5e5e5e" stroke-width="1.1"/>
<path d="M78.15 94.10 L80.40 96.50 L82.65 94.10" fill="none" stroke="#444" stroke-width="1.15" stroke-linecap="round" stroke-linejoin="round"/>
<path d="M106.3 42.6 L111.2 52.8 M112.1 42.6 L107.2 52.8" fill="none" stroke="#444" stroke-width="1.05" stroke-linecap="round"/>
<circle cx="106.6" cy="54.5" r="1.6" fill="none" stroke="#2b7cd3" stroke-width="1.1"/><circle cx="111.9" cy="54.5" r="1.6" fill="none" stroke="#2b7cd3" stroke-width="1.1"/>
<path d="M107.6 66 H103.6 Q102.7 66 102.7 66.9 V76.8 Q102.7 77.7 103.6 77.7 H107.4" fill="none" stroke="#444" stroke-width="1.05" />
<path d="M108.2 68.2 H112.6 L115.8 71.4 V78.8 Q115.8 79.7 114.9 79.7 H108.6 Q107.7 79.7 107.7 78.8 V69 Q107.7 68.2 108.2 68.2 Z M112.4 68.4 V71.6 H115.6" fill="#f8f8f8" stroke="#444" stroke-width="1.05" />
<rect x="110.2" y="73.6" width="3.4" height="4" fill="#a8a8a8"/>
<path d="M122.55 72.00 L124.80 74.40 L127.05 72.00" fill="none" stroke="#444" stroke-width="1.15" stroke-linecap="round" stroke-linejoin="round"/>
<path d="M103 95.6 L109.2 92.2 L112.6 98.2 L108.8 102.8 Z" fill="#fbe3c0" stroke="#e8a23d" stroke-width="1.2" />
<path d="M105.4 97.4 L108.4 102.2 M107.6 96 L110.4 100.6" fill="none" stroke="#e8a23d" stroke-width="0.9" />
<path d="M109 92 L111.6 90.6 L114.2 95.2 L112.4 98 Z" fill="#f6f6f6" stroke="#444" stroke-width="1.0" />
<path d="M112.2 91.4 L114.6 88.8 Q115.6 88.2 116.2 89.2 Q116.6 90 115.8 90.8 L113.6 93.4" fill="#f6f6f6" stroke="#444" stroke-width="1.0" />
<path d="M129.4 121.4 V115.4 H135.4" fill="none" stroke="#6a6a6a" stroke-width="1.0" />
<path d="M131.9 117.9 L135.6 121.60000000000001 M135.8 118.60000000000001 V121.80000000000001 H132.6" fill="none" stroke="#6a6a6a" stroke-width="1.0" />
<path d="M234.30 55.25 L236.90 57.95 L239.50 55.25" fill="none" stroke="#444" stroke-width="1.15" stroke-linecap="round" stroke-linejoin="round"/>
<path d="M276.40 55.25 L279.00 57.95 L281.60 55.25" fill="none" stroke="#444" stroke-width="1.15" stroke-linecap="round" stroke-linejoin="round"/>
<path d="M299.5 52.1 L301.2 50.3 L302.9 52.1" fill="none" stroke="#2b7cd3" stroke-width="1.0" stroke-linecap="round" stroke-linejoin="round"/>
<path d="M320.4 50.4 L322.1 52.2 L323.8 50.4" fill="none" stroke="#2b7cd3" stroke-width="1.0" stroke-linecap="round" stroke-linejoin="round"/>
<path d="M211.95 85.40 L214.20 87.80 L216.45 85.40" fill="none" stroke="#444" stroke-width="1.15" stroke-linecap="round" stroke-linejoin="round"/>
<path d="M247.95 85.40 L250.20 87.80 L252.45 85.40" fill="none" stroke="#444" stroke-width="1.15" stroke-linecap="round" stroke-linejoin="round"/>
<path d="M283.75 85.40 L286.00 87.80 L288.25 85.40" fill="none" stroke="#444" stroke-width="1.15" stroke-linecap="round" stroke-linejoin="round"/>
<path d="M318.25 85.40 L320.50 87.80 L322.75 85.40" fill="none" stroke="#444" stroke-width="1.15" stroke-linecap="round" stroke-linejoin="round"/>
<rect x="228.6" y="79.7" width="11.6" height="11.6" fill="none" stroke="#9a9a9a" stroke-width="0.9"/>
<path d="M234.4 79.7 V91.3 M228.6 85.5 H240.2" fill="none" stroke="#9a9a9a" stroke-width="0.9" />
<path d="M228.2 92.1 H240.6" fill="none" stroke="#444" stroke-width="1.3" />
<path d="M269.6 79.6 L275.2 85.2 L270.6 88.6 L265.6 83.8 Z" fill="#fbfbfb" stroke="#444" stroke-width="1.05" stroke-linejoin="round"/>
<path d="M268.8 78.8 L270.6 80.6" fill="none" stroke="#444" stroke-width="1.05" />
<path d="M274.4 81.6 Q276.8 83.4 276.4 87" fill="none" stroke="#2b7cd3" stroke-width="1.2" stroke-linecap="round"/>
<path d="M324 121.4 V115.4 H330" fill="none" stroke="#6a6a6a" stroke-width="1.0" />
<path d="M326.5 117.9 L330.2 121.60000000000001 M330.4 118.60000000000001 V121.80000000000001 H327.2" fill="none" stroke="#6a6a6a" stroke-width="1.0" />
<path d="M344.80 49.60 H356.20 M347.00 53.30 H354.00 M344.80 57.00 H356.20 " fill="none" stroke="#555" stroke-width="1.25" />
<path d="M366.00 52.50 H377.40 M368.20 56.20 H375.20 M366.00 59.90 H377.40 " fill="none" stroke="#555" stroke-width="1.25" />
<path d="M387.50 55.80 H398.90 M389.70 59.50 H396.70 M387.50 63.20 H398.90 " fill="none" stroke="#555" stroke-width="1.25" />
<path d="M344.80 80.10 H356.20 M344.80 83.85 H352.40 M344.80 87.60 H356.20 M344.80 91.35 H352.40 " fill="none" stroke="#555" stroke-width="1.25" />
<path d="M366.00 80.10 H377.40 M368.00 83.85 H375.40 M366.00 87.60 H377.40 M368.00 91.35 H375.40 " fill="none" stroke="#555" stroke-width="1.25" />
<path d="M387.70 80.10 H399.10 M391.50 83.85 H399.10 M387.70 87.60 H399.10 M391.50 91.35 H399.10 " fill="none" stroke="#555" stroke-width="1.25" />
<path d="M410.80 80.10 H422.20 M417.40 83.85 H422.20 M417.40 87.60 H422.20 M410.80 91.35 H422.20 " fill="none" stroke="#555" stroke-width="1.25" />
<path d="M416.4 85.7 H411.2 M413.2 83.6 L411 85.7 L413.2 87.8" fill="none" stroke="#2b7cd3" stroke-width="1.1" stroke-linecap="round" stroke-linejoin="round"/>
<path d="M432.30 80.10 H443.70 M438.90 83.85 H443.70 M438.90 87.60 H443.70 M432.30 91.35 H443.70 " fill="none" stroke="#555" stroke-width="1.25" />
<path d="M432.4 85.7 H437.6 M435.6 83.6 L437.8 85.7 L435.6 87.8" fill="none" stroke="#2b7cd3" stroke-width="1.1" stroke-linecap="round" stroke-linejoin="round"/>
<text x="0" y="0" font-family="Liberation Sans,sans-serif" font-size="8.4" fill="#444" transform="translate(410.4 57.4) rotate(-42)">ab</text>
<path d="M414.6 62 L423.2 52.2 M419.4 52 H423.4 V56" fill="none" stroke="#2b7cd3" stroke-width="1.15" stroke-linecap="round" stroke-linejoin="round"/>
<path d="M428.85 55.20 L431.10 57.60 L433.35 55.20" fill="none" stroke="#444" stroke-width="1.15" stroke-linecap="round" stroke-linejoin="round"/>
<text x="463.6" y="56.6" font-family="Liberation Sans,sans-serif" font-size="8.6" fill="#444">ab</text>
<text x="463.6" y="63.6" font-family="Liberation Sans,sans-serif" font-size="8.6" fill="#444">c</text>
<path d="M474.2 54.6 V58.4 Q474.2 61 471.6 61 H469.4 M471 58.8 L468.8 61 L471 63.2" fill="none" stroke="#2b7cd3" stroke-width="1.15" stroke-linecap="round" stroke-linejoin="round"/>
<rect x="461.6" y="79" width="12" height="13" fill="#fbfbfb" stroke="#5e5e5e" stroke-width="1"/>
<rect x="462.1" y="82.6" width="11" height="5.8" fill="#cfe4f7" stroke="#2b7cd3" stroke-width="0.9"/>
<path d="M465.6 79 V82.6 M469.6 79 V82.6 M465.6 88.4 V92 M469.6 88.4 V92" fill="none" stroke="#5e5e5e" stroke-width="0.9" />
<path d="M464 85.5 H471.2 M465.4 84.1 L464 85.5 L465.4 86.9 M469.8 84.1 L471.2 85.5 L469.8 86.9" fill="none" stroke="#2b7cd3" stroke-width="0.95" stroke-linecap="round" stroke-linejoin="round"/>
<path d="M559.45 85.40 L561.70 87.80 L563.95 85.40" fill="none" stroke="#444" stroke-width="1.15" stroke-linecap="round" stroke-linejoin="round"/>
<path d="M566.2 121.4 V115.4 H572.2" fill="none" stroke="#6a6a6a" stroke-width="1.0" />
<path d="M568.7 117.9 L572.4000000000001 121.60000000000001 M572.6 118.60000000000001 V121.80000000000001 H569.4000000000001" fill="none" stroke="#6a6a6a" stroke-width="1.0" />
<path d="M694.80 55.45 L697.40 58.15 L700.00 55.45" fill="none" stroke="#444" stroke-width="1.15" stroke-linecap="round" stroke-linejoin="round"/>
<path d="M606.30 85.20 L608.10 87.20 L609.90 85.20" fill="none" stroke="#444" stroke-width="1.1" stroke-linecap="round" stroke-linejoin="round"/>
<text x="672.4" y="84.6" font-family="Liberation Sans,sans-serif" font-size="8" fill="#555">0</text><text x="668.4" y="92.8" font-family="Liberation Sans,sans-serif" font-size="8" fill="#555" textLength="10" lengthAdjust="spacingAndGlyphs">.00</text>
<path d="M670.6 81.4 H665.4 M667.4 79.4 L665.2 81.4 L667.4 83.4" fill="none" stroke="#2b7cd3" stroke-width="1.05" stroke-linecap="round" stroke-linejoin="round"/>
<text x="689.2" y="84.6" font-family="Liberation Sans,sans-serif" font-size="8" fill="#555" textLength="10" lengthAdjust="spacingAndGlyphs">.00</text><text x="692.6" y="92.8" font-family="Liberation Sans,sans-serif" font-size="8" fill="#555" textLength="6.4" lengthAdjust="spacingAndGlyphs">.0</text>
<path d="M685.6 89.6 H690.8 M688.8 87.6 L691 89.6 L688.8 91.6" fill="none" stroke="#2b7cd3" stroke-width="1.05" stroke-linecap="round" stroke-linejoin="round"/>
<path d="M699.4 121.4 V115.4 H705.4" fill="none" stroke="#6a6a6a" stroke-width="1.0" />
<path d="M701.9 117.9 L705.6 121.60000000000001 M705.8 118.60000000000001 V121.80000000000001 H702.6" fill="none" stroke="#6a6a6a" stroke-width="1.0" />
<rect x="735" y="45.4" width="23.4" height="20.4" fill="#fdfdfd"/>
<rect x="739.3" y="45.4" width="10.60" height="7.00" fill="#f4878c"/>
<rect x="739.3" y="52.4" width="7.10" height="6.60" fill="#5b9bd5"/>
<rect x="739.3" y="59.0" width="12.60" height="6.80" fill="#f4878c"/>
<path d="M735 45.4 H758.4 V65.8 H735 Z M739.3 45.4 V65.8 M749.9 45.4 V65.8 M754.2 45.4 V65.8 M735 52.4 H758.4 M735 59.0 H758.4 " fill="none" stroke="#666" stroke-width="1.0" />
<path d="M769.70 94.50 L771.80 96.70 L773.90 94.50" fill="none" stroke="#444" stroke-width="1.1" stroke-linecap="round" stroke-linejoin="round"/>
<rect x="790.3" y="45.4" width="23.4" height="20.4" fill="#fdfdfd"/>
<rect x="798.3" y="52.4" width="15.40" height="13.40" fill="#4f9fe3"/>
<path d="M790.3 45.4 H813.7 V65.8 H790.3 Z M798.3 45.4 V65.8 M806.1 45.4 V65.8 M790.3 52.4 H813.7 M790.3 59.0 H813.7 " fill="none" stroke="#666" stroke-width="1.0" />
<path d="M815.1999999999999 51.800000000000004 Q817.1999999999999 52.800000000000004 816.4 54.800000000000004 L807.1999999999999 65.4 L804.0 62.6 L813.1999999999999 52.0 Q814.1999999999999 51.2 815.1999999999999 51.800000000000004 Z" fill="#fdfdfd" stroke="#555" stroke-width="1.0" />
<path d="M803.8 62.2 L807.4 65.60000000000001 Q806.8 68.80000000000001 799.6 69.0 Q802.1999999999999 67.2 801.8 65.0 Q802.0 63.0 803.8 62.2 Z" fill="#6ab0ee" stroke="#2b7cd3" stroke-width="0.8" />
<path d="M812.30 94.50 L814.40 96.70 L816.50 94.50" fill="none" stroke="#444" stroke-width="1.1" stroke-linecap="round" stroke-linejoin="round"/>
<rect x="833.4" y="45.4" width="23.5" height="20.4" fill="#fdfdfd"/>
<rect x="837.8" y="49.7" width="15.20" height="11.20" fill="#62a9ea"/>
<path d="M833.4 45.4 H856.9 V65.8 H833.4 Z M837.8 45.4 V65.8 M853.0 45.4 V65.8 M833.4 49.7 H856.9 M833.4 60.9 H856.9 " fill="none" stroke="#666" stroke-width="1.0" />
<path d="M858.4 51.800000000000004 Q860.4 52.800000000000004 859.6 54.800000000000004 L850.4 65.4 L847.2 62.6 L856.4 52.0 Q857.4 51.2 858.4 51.800000000000004 Z" fill="#fdfdfd" stroke="#555" stroke-width="1.0" />
<path d="M847.0 62.2 L850.6 65.60000000000001 Q850.0 68.80000000000001 842.8000000000001 69.0 Q845.4 67.2 845.0 65.0 Q845.2 63.0 847.0 62.2 Z" fill="#6ab0ee" stroke="#2b7cd3" stroke-width="0.8" />
<path d="M856.70 94.50 L858.80 96.70 L860.90 94.50" fill="none" stroke="#444" stroke-width="1.1" stroke-linecap="round" stroke-linejoin="round"/>
<rect x="883.8" y="45.6" width="23.2" height="19.7" fill="#fdfdfd"/>
<path d="M883.8 45.6 H907 V65.3 H883.8 Z M891.5 45.6 V65.3 M899.3 45.6 V65.3 M883.8 52.1 H907 M883.8 58.8 H907 " fill="none" stroke="#666" stroke-width="1.0" />
<rect x="887.6" y="52.3" width="21.2" height="6.5" fill="#5aa5e6" stroke="#2b7cd3" stroke-width="0.9"/>
<path d="M899.3 52.3 V58.8" fill="none" stroke="#2b7cd3" stroke-width="0.9" />
<path d="M882.2 55.5 L888 49.8 V53.6 H894 V57.4 H888 V61.2 Z" fill="#fdfdfd" stroke="#2b7cd3" stroke-width="0.95" stroke-linejoin="round"/>
<path d="M892.90 94.10 L895.00 96.30 L897.10 94.10" fill="none" stroke="#444" stroke-width="1.1" stroke-linecap="round" stroke-linejoin="round"/>
<rect x="920.1" y="45.6" width="22.8" height="19.7" fill="#fdfdfd"/>
<path d="M920.1 52.1 V45.6 H942.9 V52.1 M920.1 52.1 H936 M927.7 45.6 V52.1 M935.3 45.6 V52.1 M920.1 58.8 V65.3 H942.9 V58.8 M920.1 58.8 H936 M927.7 58.8 V65.3 M935.3 58.8 V65.3" fill="none" stroke="#666" stroke-width="1.0" />
<path d="M923.3 52.3 H934 L936.6 55.5 L934 58.8 H923.3 Z M929 52.3 V58.8" fill="#5aa5e6" stroke="#2b7cd3" stroke-width="0.9" />
<path d="M934.8 50.6 L943.8 61.4 M943.8 50.6 L934.8 61.4" fill="none" stroke="#e2373d" stroke-width="1.15" stroke-linecap="round"/>
<path d="M928.60 94.10 L930.70 96.30 L932.80 94.10" fill="none" stroke="#444" stroke-width="1.1" stroke-linecap="round" stroke-linejoin="round"/>
<rect x="955.7" y="45.6" width="23.2" height="19.7" fill="#fdfdfd"/>
<rect x="961.8" y="52.1" width="11.40" height="6.70" fill="#5aa5e6"/>
<path d="M955.7 45.6 H978.9 V65.3 H955.7 Z M961.8 45.6 V65.3 M973.2 45.6 V65.3 M955.7 52.1 H978.9 M955.7 58.8 H978.9 " fill="none" stroke="#666" stroke-width="1.0" />
<path d="M961.2 42.3 H973.6 M961.2 41 V43.6 M973.6 41 V43.6" fill="none" stroke="#2b7cd3" stroke-width="1.0" />
<path d="M964.60 93.30 L966.70 95.50 L968.80 93.30" fill="none" stroke="#444" stroke-width="1.1" stroke-linecap="round" stroke-linejoin="round"/>
<path d="M1069.10 48.25 L1071.30 50.55 L1073.50 48.25" fill="none" stroke="#444" stroke-width="1.1" stroke-linecap="round" stroke-linejoin="round"/>
<path d="M1034.20 71.25 L1036.40 73.55 L1038.60 71.25" fill="none" stroke="#444" stroke-width="1.1" stroke-linecap="round" stroke-linejoin="round"/>
<path d="M1044.00 95.25 L1046.20 97.55 L1048.40 95.25" fill="none" stroke="#444" stroke-width="1.1" stroke-linecap="round" stroke-linejoin="round"/>
<rect x="1001.4" y="67" width="12.4" height="11.8" fill="#fcfcfc" stroke="#5e5e5e" stroke-width="1"/>
<path d="M1001 67.2 H1014.2" fill="none" stroke="#5e5e5e" stroke-width="1.6" />
<path d="M1007.6 70.2 V76.4 M1005.2 74.2 L1007.6 76.6 L1010 74.2" fill="none" stroke="#2b7cd3" stroke-width="1.05" stroke-linecap="round" stroke-linejoin="round"/>
<path d="M1008.4 90.4 L1014 96 L1006.8 103 L1001.4 97.4 Z" fill="#fcfcfc" stroke="#c044c4" stroke-width="1.1" stroke-linejoin="round"/>
<path d="M1004.6 94.2 L1010.2 99.8 L1006.8 103 L1001.4 97.4 Z" fill="#e7a6ea" stroke="#c044c4" stroke-width="1.0" stroke-linejoin="round"/>
<text x="1086.4" y="54" font-family="Liberation Sans,sans-serif" font-size="14" fill="#2b7cd3" textLength="9" lengthAdjust="spacingAndGlyphs">A</text>
<text x="1086.8" y="67.8" font-family="Liberation Sans,sans-serif" font-size="14" fill="#444" textLength="8" lengthAdjust="spacingAndGlyphs">Z</text>
<path d="M1096.6 50 H1109.4 L1104.6 56.2 V62.6 L1101.4 63.4 V56.2 Z" fill="#fbfbfb" stroke="#444" stroke-width="1.1" stroke-linejoin="round"/>
<path d="M1107.20 94.50 L1109.30 96.70 L1111.40 94.50" fill="none" stroke="#444" stroke-width="1.1" stroke-linecap="round" stroke-linejoin="round"/>
<circle cx="1139" cy="52.3" r="8.9" fill="none" stroke="#444" stroke-width="1.05"/>
<path d="M1132.8 58.8 L1124.2 69" fill="none" stroke="#444" stroke-width="1.15" stroke-linecap="round"/>
<path d="M1148.10 94.50 L1150.20 96.70 L1152.30 94.50" fill="none" stroke="#444" stroke-width="1.1" stroke-linecap="round" stroke-linejoin="round"/>
<rect x="1175" y="41.6" width="26" height="28.2" fill="#fbfbfb" stroke="#555" stroke-width="1.1"/>
<rect x="1175" y="41.6" width="26" height="3.2" fill="#d6d6d6" stroke="#555" stroke-width="1.1"/>
<path d="M1175 53 H1201 M1175 61.6 H1201 M1183.6 61.6 V69.8 M1192.4 61.6 V69.8" fill="none" stroke="#a6a6a6" stroke-width="0.9" />
<circle cx="1187.3" cy="52.8" r="7.8" fill="#fbfbfb" stroke="#555" stroke-width="1.15"/>
<rect x="1182.8" y="52.2" width="2.6" height="4.6" fill="#c9c9c9" stroke="#8a8a8a" stroke-width="0.5"/><rect x="1185.8" y="49.4" width="2.6" height="7.4" fill="#c9c9c9" stroke="#8a8a8a" stroke-width="0.5"/><rect x="1188.8" y="48.2" width="2.8" height="8.6" fill="#4f9fe3"/>
<path d="M1193 58.6 L1201.2 68.4" fill="none" stroke="#555" stroke-width="1.3" stroke-linecap="round"/>
<path d="M1258.20 112.60 L1261.40 115.80 L1264.60 112.60" fill="none" stroke="#222" stroke-width="1.5" stroke-linecap="round" stroke-linejoin="round"/>
<path d="M20.3 136.4 L26 139.8 V146.6 L21.4 149.6 H18.6" fill="none" stroke="#2e77c2" stroke-width="1.2" stroke-linejoin="round" stroke-linecap="round"/>
<path d="M20.3 136.4 L14.6 139.8 V144.4" fill="none" stroke="#2e77c2" stroke-width="1.2" stroke-linejoin="round" stroke-linecap="round"/>
<circle cx="15.6" cy="147.6" r="2.4" fill="none" stroke="#2e77c2" stroke-width="1.2"/>
<path d="M40 140.2 H46" fill="none" stroke="#444" stroke-width="1.1" />
<path d="M40.50 142.90 L43.00 145.50 L45.50 142.90" fill="none" stroke="#444" stroke-width="1.3" stroke-linecap="round" stroke-linejoin="round"/>
<path d="M79.70 177.30 L82.70 180.70 L85.70 177.30" fill="none" stroke="#222" stroke-width="1.7" stroke-linecap="round" stroke-linejoin="round"/>
<path d="M114.2 173.2 L123 182 M123 173.2 L114.2 182" fill="none" stroke="#b8b8b8" stroke-width="1.0" />
<path d="M132.3 178 L136.8 181.8 L145 172.4" fill="none" stroke="#b3b3b3" stroke-width="1.0" />
<path d="M1262.80 175.00 L1265.80 178.40 L1268.80 175.00" fill="none" stroke="#222" stroke-width="1.7" stroke-linecap="round" stroke-linejoin="round"/>
<path d="M1121 16.6 H1128 Q1128.8 16.6 1128.8 17.4 V21.8 Q1128.8 22.6 1128 22.6 H1124.4 L1122.4 24.6 V22.6 H1121 Q1120.2 22.6 1120.2 21.8 V17.4 Q1120.2 16.6 1121 16.6 Z" fill="none" stroke="#333" stroke-width="1.0" stroke-linejoin="round"/>
<path d="M1211.4 19.2 H1210.4 Q1209.4 19.2 1209.4 20.2 V24 Q1209.4 25 1210.4 25 H1216 Q1217 25 1217 24 V23.2" fill="none" stroke="#fff" stroke-width="1.0" stroke-linecap="round"/>
<path d="M1212.4 22.6 Q1212.6 19.2 1216.4 19 V17 L1219 19.6 L1216.4 22.2 V20.6 Q1213.8 20.6 1212.4 22.6 Z" fill="none" stroke="#fff" stroke-width="0.9" stroke-linejoin="round"/>
<path d="M1260.60 20.00 L1262.90 22.40 L1265.20 20.00" fill="none" stroke="#fff" stroke-width="1.2" stroke-linecap="round" stroke-linejoin="round"/>
<rect x="49" y="704.0" width="8.6" height="9.6" fill="none" stroke="#555" stroke-width="1"/>
<path d="M49 706.2 H57.6 M51 708.6 H52.6 M51 711.0 H52.6" fill="none" stroke="#555" stroke-width="0.9" />
<circle cx="56.4" cy="711.0" r="3.2" fill="#f3f3f3" stroke="#444" stroke-width="1"/><circle cx="56.4" cy="711.0" r="1.3" fill="#444"/>
<circle cx="78.4" cy="704.4" r="1.4" fill="none" stroke="#444" stroke-width="0.9"/>
<path d="M73.8 706.6 L77 707.4 H79.8 L83 706.6 M77 707.4 L76.4 710.6 L74.4 715.0 M79.8 707.4 L80 710.0" fill="none" stroke="#444" stroke-width="1.0" stroke-linecap="round" stroke-linejoin="round"/>
<path d="M78.2 711.6 L82.2 715.6 M82.2 711.6 L78.2 715.6" fill="none" stroke="#444" stroke-width="1.0" stroke-linecap="round"/>
<path d="M1043.2 703.7 H1053.6 V715.1 H1043.2 Z M1046.7 703.7 V715.1 M1050.1 703.7 V715.1 M1043.2 707.5 H1053.6 M1043.2 711.3 H1053.6" fill="none" stroke="#333" stroke-width="1.0" />
<rect x="1076.4" y="703.7" width="10.8" height="11.4" fill="none" stroke="#444" stroke-width="1"/><rect x="1079" y="706.1" width="5.6" height="6.6" fill="none" stroke="#444" stroke-width="0.9"/>
<path d="M1081.8 707.7 V711.3" fill="none" stroke="#444" stroke-width="0.9" />
<path d="M1109.6 703.7 H1120.4 V715.1 H1109.6 Z M1113.4 703.7 V709.5 H1117 V703.7" fill="none" stroke="#444" stroke-width="1.0" />
<rect x="521.4" y="392.6" width="17.6" height="20.6" fill="#fcfcfc" stroke="#8dbfa5" stroke-width="1.1"/>
<rect x="524.2" y="396.6" width="11.6" height="12.6" fill="#f2f2f2" stroke="#8a8a8a" stroke-width="1"/>
<path d="M524.2 399.2 H535.8" fill="none" stroke="#8a8a8a" stroke-width="1.6" />
<rect x="531.6" y="403.2" width="3.4" height="1.4" fill="#7a7a7a"/>
<path d="M526.4 395.4 L527.6 398.2 M525 396.8 H529" fill="none" stroke="#f08a24" stroke-width="1.1" />
<path d="M481.4 379.4 H484.8 V382.6 H488 V386 H484.8 V389.2 H481.4 V386 H478.2 V382.6 H481.4 Z" fill="#fff" stroke="#111" stroke-width="1.3" stroke-linejoin="round"/>
<rect x="121.5" y="292.5" width="401" height="104.6" fill="none" stroke="#e6000f" stroke-width="3"/>
<line x1="522.5" y1="397.2" x2="732" y2="521.5" stroke="#e6000f" stroke-width="3"/>
</svg>
</div></body></html>
